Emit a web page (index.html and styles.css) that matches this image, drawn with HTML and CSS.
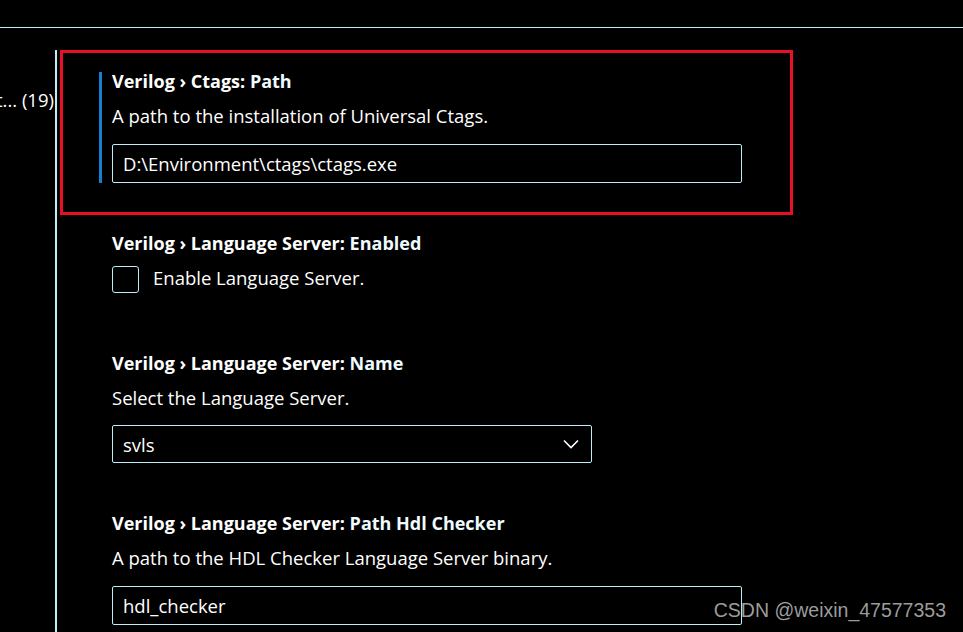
FILE: index.html
```
<!DOCTYPE html>
<html lang="en">
<head>
    <meta charset="UTF-8">
    <meta name="viewport" content="width=device-width, initial-scale=1.0">
    <title>Settings</title>
    <link rel="stylesheet" href="styles.css">
</head>
<body>
    <div class="header"></div>
    <div class="editor">
        <div class="toc">
            <div class="toc-item"><span>t... (19)</span></div>
        </div>
        <div class="settings">
            <div class="setting highlighted">
                <div class="setting-body focused">
                    <div class="setting-title">Verilog › Ctags: <span class="key">Path</span></div>
                    <div class="setting-desc">A path to the installation of Universal Ctags.</div>
                    <div class="text-input">D:\Environment\ctags\ctags.exe</div>
                </div>
            </div>
            <div class="setting">
                <div class="setting-body">
                    <div class="setting-title">Verilog › Language Server: <span class="key">Enabled</span></div>
                    <div class="bool-row">
                        <div class="checkbox"></div>
                        <div class="bool-label">Enable Language Server.</div>
                    </div>
                </div>
            </div>
            <div class="setting select-setting">
                <div class="setting-body">
                    <div class="setting-title">Verilog › Language Server: <span class="key">Name</span></div>
                    <div class="setting-desc">Select the Language Server.</div>
                    <div class="select-box">
                        <span>svls</span>
                        <svg class="chevron" width="16" height="16" viewBox="0 0 16 16">
                            <path d="M1 4.5 L8 11.5 L15 4.5" fill="none" stroke="#fff" stroke-width="1.6"/>
                        </svg>
                    </div>
                </div>
            </div>
            <div class="setting">
                <div class="setting-body">
                    <div class="setting-title">Verilog › Language Server: <span class="key">Path Hdl Checker</span></div>
                    <div class="setting-desc">A path to the HDL Checker Language Server binary.</div>
                    <div class="text-input">hdl_checker</div>
                </div>
            </div>
        </div>
    </div>
    <div class="watermark">CSDN @weixin_47577353</div>
</body>
</html>
```

FILE: styles.css
```
body {
    font-family: "Open Sans", "Noto Sans", sans-serif;
    font-size: 18.5px;
    margin: 0;
    padding: 0;
    background-color: #000;
    color: #fff;
    height: 632px;
    overflow: hidden;
}
.header {
    height: 27px;
    border-bottom: 1px solid #bdeef6;
}
.editor {
    display: flex;
    padding-top: 22px;
    height: 583px;
}
.toc {
    width: 55px;
    border-right: 2px solid #bdeef6;
    flex-shrink: 0;
}
.toc-item {
    margin-top: 39px;
    height: 22px;
    line-height: 22px;
    display: flex;
    justify-content: flex-end;
    overflow: hidden;
    white-space: nowrap;
    padding-right: 1px;
}
.settings {
    flex: 1;
}
.setting {
    width: 733px;
    margin-left: 3px;
    box-sizing: border-box;
    padding: 19px 0 29px 39px;
}
.setting.highlighted {
    border: 3px solid #e81123;
    padding-left: 36px;
}
.setting.select-setting {
    padding-bottom: 32px;
}
.setting-body {
    border-left: 3px solid transparent;
    padding-left: 10px;
}
.setting-body.focused {
    border-left-color: #1380d0;
}
.setting-title {
    font-weight: bold;
    font-size: 18px;
    line-height: 18px;
    white-space: nowrap;
}
.setting-title .key {
    color: #eefcff;
}
.setting-desc {
    margin-top: 14px;
    line-height: 24px;
}
.text-input,
.select-box {
    margin-top: 16px;
    height: 39px;
    box-sizing: border-box;
    border: 1px solid #bdeef6;
    border-radius: 2px;
    padding: 0 10px;
    display: flex;
    align-items: center;
}
.text-input {
    width: 630px;
}
.select-box {
    width: 480px;
    height: 38px;
    margin-top: 15px;
    justify-content: space-between;
    padding-right: 12px;
}
.bool-row {
    display: flex;
    align-items: center;
    height: 27px;
    margin-top: 14px;
    margin-bottom: 13px;
}
.checkbox {
    width: 27px;
    height: 27px;
    box-sizing: border-box;
    border: 1px solid #bdeef6;
    border-radius: 3px;
}
.bool-label {
    margin-left: 14px;
    line-height: 22px;
    padding-bottom: 3px;
}
.watermark {
    position: absolute;
    right: 17px;
    bottom: 10px;
    font-family: "Liberation Sans", Arial, sans-serif;
    font-size: 19.5px;
    color: #9c9c9c;
}
```
